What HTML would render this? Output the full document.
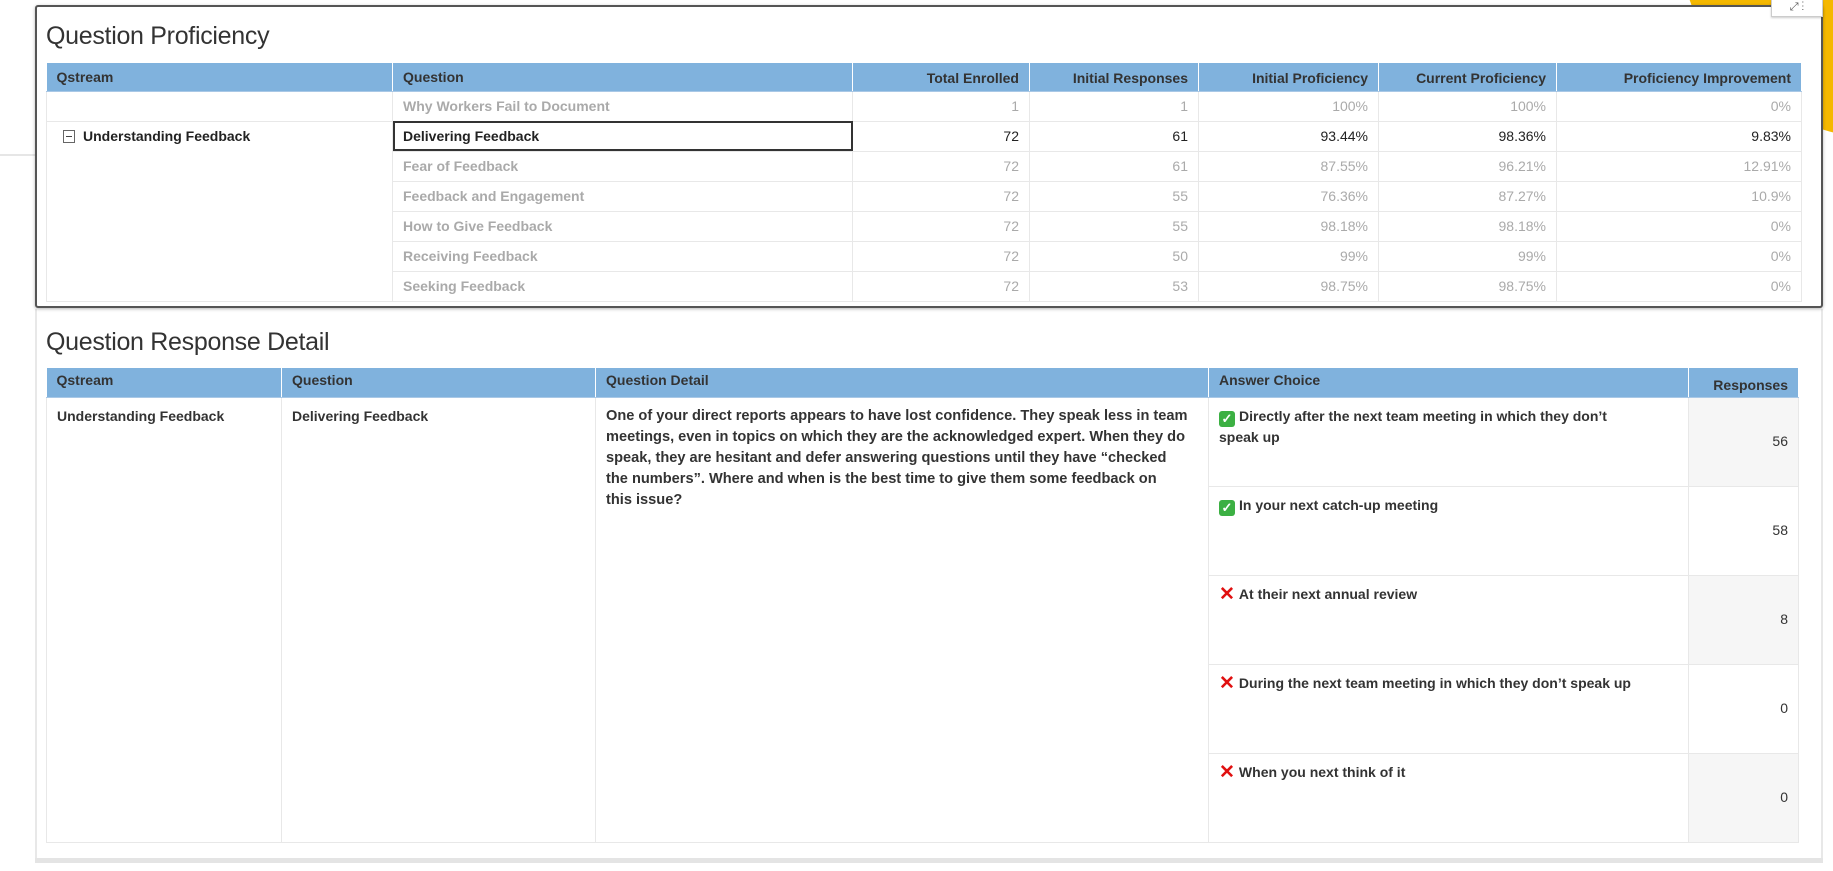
<!DOCTYPE html>
<html><head><meta charset="utf-8"><style>
*{box-sizing:border-box;margin:0;padding:0}
body{width:1833px;height:871px;background:#fff;font-family:"Liberation Sans",sans-serif;position:relative;overflow:hidden;color:#333}
.blob{position:absolute;left:1680px;top:-260px;width:420px;height:400px;border-radius:50%;background:#f5b800}
.bgline{position:absolute;left:0;top:154px;width:36px;height:2px;background:#e6e6e6}
.card1{position:absolute;left:35px;top:5px;width:1788px;height:303px;border:2px solid #555;border-radius:3px;background:#fff;box-shadow:0 1px 3px rgba(0,0,0,.3)}
.card2{position:absolute;left:35px;top:309px;width:1788px;height:549px;border-left:2px solid #e8e8e8;border-right:2px solid #e8e8e8;background:#fff}
.bottombar{position:absolute;left:35px;top:858px;width:1788px;height:5px;background:#e4e4e4}
h2{position:absolute;font-weight:normal;font-size:25px;color:#333;letter-spacing:-0.3px}
table{position:absolute;border-collapse:collapse;table-layout:fixed;font-size:14px}
th{background:#80b2dd;color:#333;font-weight:bold;text-align:left;padding:0 10px;border-right:1px solid #fff;border-bottom:1px solid #a9c8e6}
td{border:1px solid #e8e8e8;padding:0 10px;white-space:nowrap}
.t1 th{height:28px;vertical-align:middle}
.t1 .r{text-align:right}
.t1 td{height:30px;color:#aaa;font-weight:normal}
.t1 td.q{font-weight:bold}
.t1 tr.sel td{color:#222}
.t1 tr.sel td.q{outline:2px solid #333;outline-offset:-2px}
.t2 th{height:29px;vertical-align:middle}
.t2 td{height:89px;vertical-align:top;font-weight:bold;font-size:14px;color:#333;padding-top:8px;white-space:normal;line-height:21px}
.t2 td.n{text-align:right;font-weight:normal;vertical-align:middle;padding-top:0;background:#fff}
.t2 td.g{background:#f6f6f6}
.ck{display:inline-block;width:16px;height:16px;background:#3cb043;border-radius:3px;color:#fff;font-size:13px;line-height:16px;text-align:center;vertical-align:-2px;margin-right:4px}
.x{color:#e01010;font-size:19px;font-weight:bold;margin-right:4px;vertical-align:-1px}
.minus{display:inline-block;width:12px;height:13px;border:1px solid #666;vertical-align:-2px;margin-right:8px;position:relative}
.minus:after{content:"";position:absolute;left:2px;top:5px;width:6px;height:1px;background:#444}
.tool{position:absolute;left:1771px;top:0;width:52px;height:17px;background:#fff;border:1px solid #ccc;border-top:none;box-shadow:0 1px 2px rgba(0,0,0,.2);font-size:11px;color:#555;text-align:center;line-height:14px}
</style></head><body>
<div class="blob"></div>
<div class="bgline"></div>
<div class="card2"></div>
<div class="bottombar"></div>
<div class="card1"></div>
<div class="tool">⤢ ⋮</div>
<h2 style="left:46px;top:22px">Question Proficiency</h2>
<table class="t1" style="left:46px;top:63px;width:1755px">
<colgroup><col style="width:346px"><col style="width:460px"><col style="width:177px"><col style="width:169px"><col style="width:180px"><col style="width:178px"><col style="width:245px"></colgroup>
<tr><th>Qstream</th><th>Question</th><th class="r" style="padding-top:3px">Total Enrolled</th><th class="r" style="padding-top:3px">Initial Responses</th><th class="r" style="padding-top:3px">Initial Proficiency</th><th class="r" style="padding-top:3px">Current Proficiency</th><th class="r" style="padding-top:3px">Proficiency Improvement</th></tr>
<tr><td style="height:26px"></td><td class="q" style="height:26px">Why Workers Fail to Document</td><td class="r">1</td><td class="r">1</td><td class="r">100%</td><td class="r">100%</td><td class="r">0%</td></tr>
<tr class="sel"><td rowspan="7" style="vertical-align:top;padding-top:6px;padding-left:16px;font-weight:bold;color:#222"><span class="minus"></span>Understanding Feedback</td><td class="q">Delivering Feedback</td><td class="r">72</td><td class="r">61</td><td class="r">93.44%</td><td class="r">98.36%</td><td class="r">9.83%</td></tr>
<tr><td class="q">Fear of Feedback</td><td class="r">72</td><td class="r">61</td><td class="r">87.55%</td><td class="r">96.21%</td><td class="r">12.91%</td></tr>
<tr><td class="q">Feedback and Engagement</td><td class="r">72</td><td class="r">55</td><td class="r">76.36%</td><td class="r">87.27%</td><td class="r">10.9%</td></tr>
<tr><td class="q">How to Give Feedback</td><td class="r">72</td><td class="r">55</td><td class="r">98.18%</td><td class="r">98.18%</td><td class="r">0%</td></tr>
<tr><td class="q">Receiving Feedback</td><td class="r">72</td><td class="r">50</td><td class="r">99%</td><td class="r">99%</td><td class="r">0%</td></tr>
<tr><td class="q">Seeking Feedback</td><td class="r">72</td><td class="r">53</td><td class="r">98.75%</td><td class="r">98.75%</td><td class="r">0%</td></tr>
</table>
<h2 style="left:46px;top:328px">Question Response Detail</h2>
<table class="t2" style="left:46px;top:368px;width:1752px">
<colgroup><col style="width:235px"><col style="width:314px"><col style="width:613px"><col style="width:480px"><col style="width:110px"></colgroup>
<tr><th style="padding-bottom:4px">Qstream</th><th style="padding-bottom:4px">Question</th><th style="padding-bottom:4px">Question Detail</th><th style="padding-bottom:4px">Answer Choice</th><th style="text-align:right;padding-top:6px">Responses</th></tr>
<tr><td rowspan="5">Understanding Feedback</td><td rowspan="5">Delivering Feedback</td><td rowspan="5" style="font-size:14.6px;white-space:nowrap">One of your direct reports appears to have lost confidence. They speak less in team<br>meetings, even in topics on which they are the acknowledged expert. When they do<br>speak, they are hesitant and defer answering questions until they have “checked<br>the numbers”. Where and when is the best time to give them some feedback on<br>this issue?</td><td><span class="ck">✓</span>Directly after the next team meeting in which they don’t<br>speak up</td><td class="n g">56</td></tr>
<tr><td><span class="ck">✓</span>In your next catch-up meeting</td><td class="n">58</td></tr>
<tr><td><span class="x">✕</span>At their next annual review</td><td class="n g">8</td></tr>
<tr><td><span class="x">✕</span>During the next team meeting in which they don’t speak up</td><td class="n">0</td></tr>
<tr><td><span class="x">✕</span>When you next think of it</td><td class="n g">0</td></tr>
</table>
</body></html>
